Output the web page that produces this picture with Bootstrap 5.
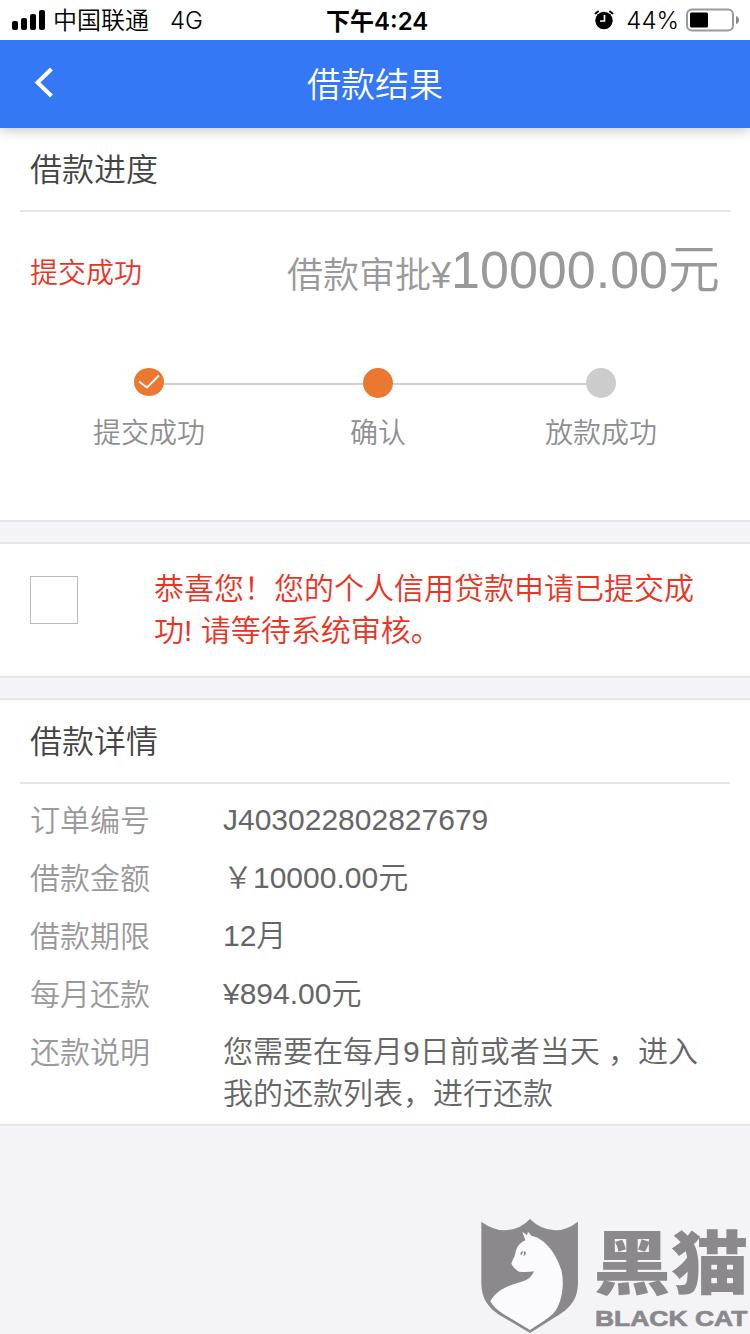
<!DOCTYPE html>
<html lang="zh-CN">
<head>
<meta charset="utf-8">
<meta name="viewport" content="width=device-width, initial-scale=1">
<title>借款结果</title>
<link href="https://cdn.jsdelivr.net/npm/bootstrap@5.3.0/dist/css/bootstrap.min.css" rel="stylesheet">
<style>
body{font-family:"Liberation Sans","Noto Sans CJK SC",sans-serif;font-weight:350;background:#f4f3f8;color:#666;font-size:30px;line-height:42px;min-height:1334px;overflow:hidden}
.status{height:40px;font:350 24px/42px Inter,"Noto Sans CJK SC",sans-serif;color:#000;padding:0 11px 0 12px;z-index:3}
.status span{padding-top:2px}
.carrier{margin-left:7px}
.network{margin-left:21px}
.time{left:326px;top:-1px}
.battery-text{margin:0 7px 0 12px}
.topbar{height:88px;background:#3478f6;box-shadow:0 2px 12px rgba(0,0,0,.24);z-index:2}
.topbar h1{font-size:34px;line-height:90px;font-weight:350}
.back{left:34px;top:27px}
.panel{border-bottom:2px solid #e6e6e8}
.panel + .panel{border-top:2px solid #e6e6e8;margin-top:20px}
.panel-title{font-size:32px;line-height:84px;height:84px;color:#444;margin:0 20px;padding-left:10px;border-bottom:2px solid #e6e6e6;font-weight:350}
.progress-panel{height:394px}
.red{color:#ec3323}
.gray{color:#999}
.state{font-size:28px;padding-top:3px}
.sum{font-size:36px;line-height:60px;height:64px}
.sum b{font-size:52px;font-weight:350}
.summary{height:120px;padding:0 30px}
.track{padding:0 134px;margin-top:35px;height:32px}
.dot{width:30px;height:30px;background:#ea7830;flex:none}
.dot-off{background:#ccc}
.bar{height:2px;background:#d0d0d0;margin-top:2px}
.labels{display:grid;grid-template-columns:257px 195px 112px;font-size:28px;color:#8e8e93;padding-left:93px;margin-top:14px}
.notice{height:136px;padding:24px 30px 0}
.check{width:48px;height:48px;border:1px solid #bbb;margin-top:8px;flex:none}
.notice p{margin-left:76px;width:545px}
.details{height:428px}
.details dl{padding:15px 30px 0}
.details .item{min-height:42px;margin-bottom:16px}
.details dt{width:193px;font-weight:350;color:#999;flex:none;padding-top:1px;height:42px}
.watermark{right:0;bottom:0}
</style>
</head>
<body>
<div class="status bg-white d-flex align-items-center position-relative">
  <svg width="34" height="20" viewBox="0 0 34 20"><rect x="0" y="11" width="6" height="9" rx="2"/><rect x="9" y="8" width="6" height="12" rx="2"/><rect x="18" y="4" width="6" height="16" rx="2"/><rect x="27" y="0" width="6" height="20" rx="2"/></svg>
  <span class="carrier">中国联通</span><span class="network">4G</span>
  <span class="position-absolute fw-semibold time">下午4:24</span>
  <svg class="ms-auto" width="20" height="20" viewBox="0 0 20 20"><circle cx="10" cy="10.500" r="8.700"/><path d="M1.500 3.500 4 1.500M16 1.500l2.500 2" stroke="#000" stroke-width="2" stroke-linecap="round"/><path d="M10.500 5v6H6" fill="none" stroke="#fff" stroke-width="1.700"/></svg>
  <span class="battery-text">44%</span>
  <svg width="53" height="24" viewBox="0 0 53 24"><rect x="1" y="1.500" width="46" height="21" rx="5" fill="none" stroke="#999" stroke-width="2"/><rect x="4" y="4.500" width="18" height="15" rx="1.500"/><path d="M50 8q3 1 3 4t-3 4z" fill="#888"/></svg>
</div>
<header class="topbar position-relative text-center text-white">
  <svg class="back position-absolute" width="22" height="32" viewBox="0 0 22 32"><path d="M17.500 2 3.500 15.500 17.500 29" fill="none" stroke="#fff" stroke-width="4"/></svg>
  <h1 class="m-0">借款结果</h1>
</header>
<main>
  <section class="panel progress-panel bg-white">
    <h2 class="panel-title mb-0">借款进度</h2>
    <div class="summary d-flex align-items-center justify-content-between">
      <span class="state red">提交成功</span><span class="sum gray text-nowrap">借款审批¥<b>10000.00元</b></span>
    </div>
    <div class="track d-flex align-items-center">
      <svg class="flex-shrink-0" width="30" height="30" viewBox="0 0 30 30"><ellipse cx="15" cy="14" rx="15" ry="14" fill="#ea7830"/><path d="m5 13.500 8 6L25 7.500" fill="none" stroke="#fff" stroke-width="1.800"/></svg>
      <i class="bar" style="width:199px"></i><i class="dot rounded-circle"></i><i class="bar flex-grow-1"></i><i class="dot dot-off rounded-circle"></i>
    </div>
    <div class="labels"><span>提交成功</span><span>确认</span><span>放款成功</span></div>
  </section>
  <section class="panel notice bg-white d-flex">
    <span class="check"></span>
    <p class="red mb-0">恭喜您！您的个人信用贷款申请已提交成功! 请等待系统审核。</p>
  </section>
  <section class="panel details bg-white">
    <h2 class="panel-title mb-0">借款详情</h2>
    <dl class="mb-0">
      <div class="item d-flex"><dt>订单编号</dt><dd class="mb-0">J403022802827679</dd></div>
      <div class="item d-flex"><dt>借款金额</dt><dd class="mb-0">￥10000.00元</dd></div>
      <div class="item d-flex"><dt>借款期限</dt><dd class="mb-0">12月</dd></div>
      <div class="item d-flex"><dt>每月还款</dt><dd class="mb-0">¥894.00元</dd></div>
      <div class="item d-flex"><dt>还款说明</dt><dd class="mb-0">您需要在每月9日前或者当天 ，进入<br>我的还款列表，进行还款</dd></div>
    </dl>
  </section>
</main>
<svg class="watermark position-absolute" width="280" height="129" viewBox="0 0 840 387" fill="#8b898c">
  <path d="M34 50Q70 76 105 76 150 74 180 42 212 74 255 76 290 76 324 50V230C324 285 300 310 255 337L180 384 100 337C58 312 34 285 34 230Z"/>
  <path fill="#fbfbfd" d="M157 80 171 91 174 80 184 92C225 100 258 145 274 195 284 240 276 285 258 315 247 332 225 346 180 375L100 327C80 315 68 302 61 289 77 258 108 243 143 234 170 227 184 219 192 199Q170 203 147 200C137 193 129 187 124 176 126 166 134 158 136 145 140 125 150 113 166 106Z"/>
  <path d="M151 144q4-6 8-5l-4 12q-4-2-4-7zM161 139q7 0 7 5t-8 10q4-7 1-15z"/>
  <text x="370" y="253" font-family="'Noto Sans CJK SC',sans-serif" font-weight="900" font-size="208" textLength="466" lengthAdjust="spacingAndGlyphs">黑猫</text>
  <text x="375" y="362" font-family="'Liberation Sans',sans-serif" font-weight="700" font-size="68" stroke="#8b898c" stroke-width="2" textLength="457" lengthAdjust="spacingAndGlyphs">BLACK CAT</text>
</svg>
<script src="https://cdn.jsdelivr.net/npm/bootstrap@5.3.0/dist/js/bootstrap.bundle.min.js"></script>
</body>
</html>
